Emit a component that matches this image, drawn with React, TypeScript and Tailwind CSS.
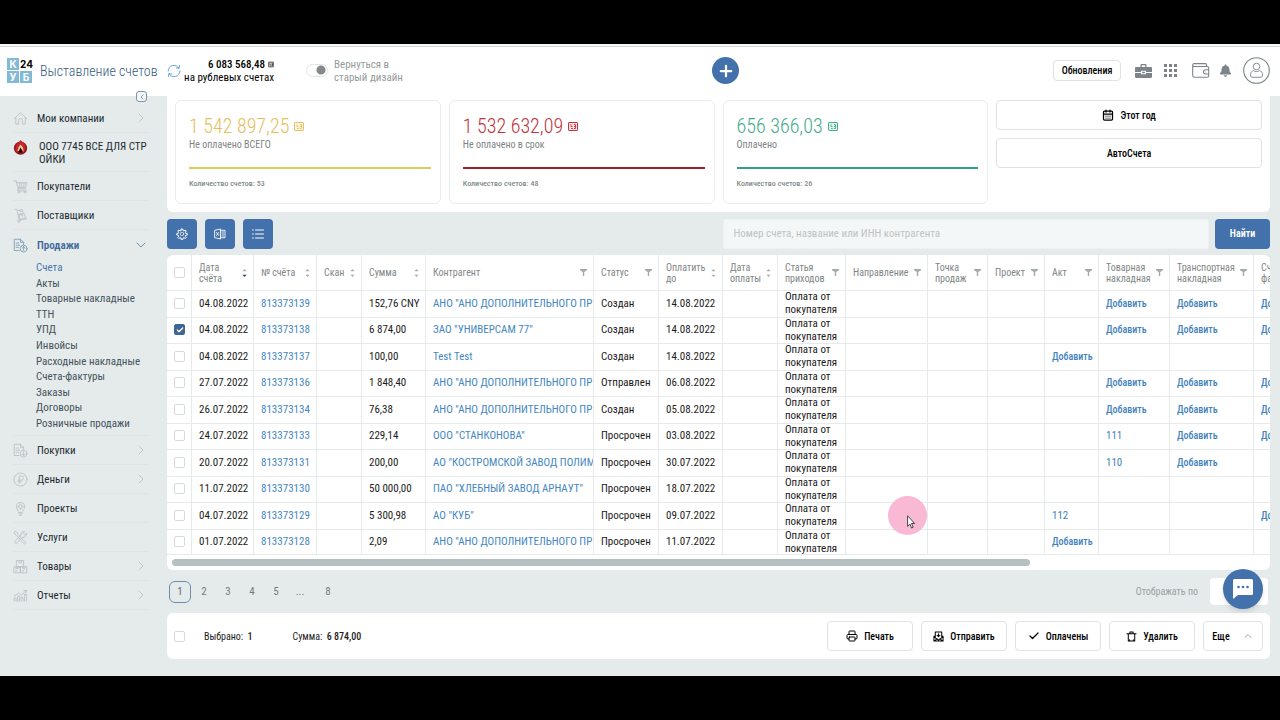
import React from "react";
import { FaBell } from "react-icons/fa";
import { CalendarDays, Check, ChevronDown, ChevronLeft, ChevronRight, ChevronUp, Plus, Printer } from "lucide-react";

type IconProps = { className?: string };

function Line({ className, children, box = 24 }: { className?: string; children: React.ReactNode; box?: number }) {
  return (
    <svg viewBox={`0 0 ${box} ${box}`} fill="none" stroke="currentColor" strokeWidth="1.4" strokeLinecap="round" strokeLinejoin="round" className={className} aria-hidden="true">
      {children}
    </svg>
  );
}

const HomeIcon = ({ className }: IconProps) => (
  <Line className={className}>
    <path d="M2 12 12 3l10 9M4.500 10.500V21H9v-6a3 3 0 0 1 6 0v6h4.500V10.500" />
  </Line>
);
const CartIcon = ({ className }: IconProps) => (
  <Line className={className}>
    <path d="M1 3h4l3.500 13H21M6 6h16l-2 8H8.200M8.500 16l-1 3H21M10 6l1 8M14 6v8M18 6l-1 8" />
    <circle cx="9.500" cy="21" r="1.500" />
    <circle cx="19" cy="21" r="1.500" />
  </Line>
);
const DollyIcon = ({ className }: IconProps) => (
  <Line className={className}>
    <path d="M3 2h3l4 17M11 19.500 22 17M8 4l7-1.500 1.500 6L9.500 10M10 11l8-2 2 7-8 2zM11 3.500l.8 3 1.500-.8M13.500 10.500l.7 2.500 1.500-.5" />
    <circle cx="9" cy="21" r="1.800" />
  </Line>
);
const SalesIcon = ({ className }: IconProps) => (
  <Line className={className}>
    <path d="M10 20H2V2h10l5 5v4M12 2v5h5M5 8h4M5 11.500h6M5 15h4" />
    <circle cx="17" cy="17" r="5.500" />
    <path d="M17 20v-6M14.500 16.300 17 14l2.500 2.300" />
  </Line>
);
const PurchaseIcon = ({ className }: IconProps) => (
  <Line className={className}>
    <path d="M10 20H2V2h10l5 5v4M12 2v5h5M5 8h4M5 11.500h6M5 15h4" />
    <circle cx="17" cy="17" r="5.500" />
    <path d="M17 14v6M14.500 17.700 17 20l2.500-2.300" />
  </Line>
);
const RubleIcon = ({ className }: IconProps) => (
  <Line className={className}>
    <circle cx="12" cy="12" r="10.500" />
    <path d="M10 18V6.500h3.500a3 3 0 0 1 0 6.500H8M8 15.500h5.500" />
  </Line>
);
const BulbIcon = ({ className }: IconProps) => (
  <Line className={className}>
    <path d="M9 18c0-3-3.500-4.500-3.500-9a6.500 6.500 0 0 1 13 0c0 4.500-3.500 6-3.500 9zM9.500 20.500h5M10.500 23h3" />
    <circle cx="12" cy="9" r="3" />
    <path d="M12 4.500V6M12 12v1.500M7.500 9H9M15 9h1.500" />
  </Line>
);
const ToolsIcon = ({ className }: IconProps) => (
  <Line className={className}>
    <path d="M2 3.500 3.500 2l4 2.500.5 2.500L20 19.500a1.800 1.800 0 0 1-2.500 2.500L6 9 3.800 7.500z" />
    <path d="M21.500 5.500 18.500 8 16 5.500l2.500-3a5 5 0 0 0-6 6L3 18a2.200 2.200 0 0 0 3 3l9.500-9.500a5 5 0 0 0 6-6z" />
  </Line>
);
const BoxesIcon = ({ className }: IconProps) => (
  <Line className={className}>
    <path d="M2 12.500h9.500V22H2zM12.500 12.500H22V22h-9.500zM6 2.500h11v10H6zM9.500 2.500V6h4V2.500M5 12.500v3h3v-3M16 12.500v3h3v-3M4 19h2M15 19h2" />
  </Line>
);
const ReportsIcon = ({ className }: IconProps) => (
  <Line className={className}>
    <path d="M2 21v-5h3v5M7.500 21v-8h3v8M13 21v-6h3v6M18.500 21V10h3v11M2 13l7-5 5 3.500L21 4M17.500 4H21v3.500" />
  </Line>
);
const CompanyLogo = ({ className }: IconProps) => (
  <svg viewBox="0 0 24 24" className={className} aria-hidden="true">
    <circle cx="12" cy="13" r="10.500" fill="#8d1416" />
    <path d="M12 0c3 3 8 6 8 12 0 4-2 7-4 9l-1-9-3-5-4 6-1 8c-3-3-4-6-3-10 1-5 6-7 8-11z" fill="#c9262b" />
    <path d="m7 18 2-7 3-4 4 5 1 7-3-4-2-3-2 5z" fill="#f0cf98" />
    <path d="m9 20 3-8 3 8z" fill="#160808" />
  </svg>
);
const SyncIcon = ({ className }: IconProps) => (
  <Line className={className}>
    <path strokeWidth="1.600" d="M2 12A10 10 0 0 1 20.500 7M22 12A10 10 0 0 1 3.500 17M21.500 2.500l-.7 5-4.800-.8M2.500 21.500l.7-5 4.800.8" />
  </Line>
);

const GearIcon = ({ className }: IconProps) => (
  <Line className={className}>
    <circle cx="12" cy="12" r="3.500" />
    <path strokeWidth="2" d="M10.500 2h3l.5 3 2 .8L18.500 4l2 2-1.800 2.500.8 2 3 .5v3l-3 .5-.8 2 1.800 2.500-2 2-2.500-1.800-2 .8-.5 3h-3l-.5-3-2-.8L5.500 21l-2-2 1.800-2.500-.8-2-3-.5v-3l3-.5.8-2L3.500 6l2-2L8 5.800l2-.8z" />
  </Line>
);
const ExcelIcon = ({ className }: IconProps) => (
  <Line className={className}>
    <path strokeWidth="1.800" d="M2 4.500 13 2v20L2 19.500zM13 4.500h9v15h-9M5 9l4.500 6M9.500 9 5 15M16 8h3M16 12h3M16 16h3" />
  </Line>
);
const ListIcon = ({ className }: IconProps) => (
  <Line className={className}>
    <path strokeWidth="2" d="M7 4h16M7 12h16M7 20h16M1 4h1.500M1 12h1.500M1 20h1.500" />
  </Line>
);
const AppsIcon = ({ className }: IconProps) => (
  <svg viewBox="0 0 13 13" fill="currentColor" className={className} aria-hidden="true">
    {[0, 5, 10].map((y) => [0, 5, 10].map((x) => <rect key={`${x}-${y}`} x={x} y={y} width="3" height="3" />))}
  </svg>
);
const BriefcaseIcon = ({ className }: IconProps) => (
  <svg viewBox="0 0 17 14" fill="currentColor" className={className} aria-hidden="true">
    <path d="M5.500 3V1.200C5.500.5 6 0 6.700 0h3.600c.7 0 1.200.5 1.200 1.200V3h4.300c.7 0 1.200.5 1.200 1.200V8h-6V6.800H6V8H0V4.200C0 3.500.5 3 1.200 3zm1.300 0h3.400V1.300H6.800zM0 9h6v1.200h5V9h6v3.800c0 .7-.5 1.200-1.200 1.200H1.200C.5 14 0 13.500 0 12.800zM7.200 7.800h2.600v1.500H7.200z" />
  </svg>
);
const WalletIcon = ({ className }: IconProps) => (
  <svg viewBox="0 0 18 15" fill="none" stroke="currentColor" strokeWidth="1.100" className={className} aria-hidden="true">
    <path d="M14.500 3.500V1.800c0-.7-.4-1.200-1.100-1.200H2C1.200.6.700 1.200.7 2s.6 1.500 1.300 1.500h13.200c.9 0 1.500.5 1.500 1.300v8c0 1-.6 1.500-1.500 1.500H2.500c-1.200 0-1.800-.6-1.800-1.800V2" />
    <path d="M17 6.800h-3.400a2.100 2.100 0 0 0 0 4.200H17M13.500 9h.6" />
  </svg>
);
const UserIcon = ({ className }: IconProps) => (
  <svg viewBox="0 0 27 27" fill="none" stroke="currentColor" className={className} aria-hidden="true">
    <circle cx="13.500" cy="13.500" r="12.800" strokeWidth="1.100" />
    <circle cx="13.500" cy="9.500" r="3.300" strokeWidth=".9" />
    <path strokeWidth=".9" d="M10.500 13.500c-2 .6-3 2.200-3 4.500 0 1.700.8 2.300 2.500 2.300h7c1.700 0 2.500-.6 2.500-2.300 0-2.300-1-3.900-3-4.500-1.800 1.500-4.200 1.500-6 0z" />
  </svg>
);
const MailIcon = ({ className }: IconProps) => (
  <Line className={className}>
    <path strokeWidth="2.200" d="M5 10 2 12v10h20V12l-3-2M5 14V2h14v12M2 13l10 7 10-7M2 22l7-5M22 22l-7-5M12 6v6M9 9.500l3 3 3-3" />
  </Line>
);
const TrashIcon = ({ className }: IconProps) => (
  <Line className={className}>
    <path strokeWidth="2.200" d="M2 6h20M5 6v16h14V6M8.500 6V2h7v4M8 19v1M16 19v1" />
  </Line>
);
const CurrencyBox = ({ className }: IconProps) => (
  <svg viewBox="0 0 10 9" fill="none" stroke="currentColor" className={className} role="img" aria-label="₽">
    <rect x=".5" y=".5" width="9" height="8" rx=".6" fill="currentColor" fillOpacity=".15" />
    <path strokeWidth=".9" d="M3 2.300v2.200h1.500M3 6.500h1.800M6 2.500h1.500v4H5.800M6 4.500h1.500" />
  </svg>
);
const SortIcon = ({ active = false }: { active?: boolean }) => (
  <svg viewBox="0 0 5 8" className="h-2 w-[5px] shrink-0" aria-hidden="true">
    <path d="M.3 2.300 2.500 0l2.200 2.300z" fill="#aab1b1" />
    <path d="M.3 5.700h4.400L2.500 8z" fill={active ? "#2a4d6e" : "#aab1b1"} />
  </svg>
);
const FilterIcon = () => (
  <svg viewBox="0 0 7 7" className="size-[7px] shrink-0" aria-hidden="true">
    <path d="M0 0h7v1.300L4.200 3v4H2.800V3L0 1.300z" fill="#a3aaaa" />
  </svg>
);

function Tick({ label, checked = false }: { label: string; checked?: boolean }) {
  return (
    <span className="relative block size-[11px]">
      <input type="checkbox" aria-label={label} defaultChecked={checked} className="peer block size-[11px] appearance-none rounded-xs border border-[#d5dadc] bg-white checked:border-[#3f6593] checked:bg-[#3f6593]" />
      <Check strokeWidth={4} className="pointer-events-none absolute inset-0 m-auto hidden size-2 text-white peer-checked:block" />
    </span>
  );
}

const topNav = [
  { label: "Покупатели", icon: CartIcon },
  { label: "Поставщики", icon: DollyIcon },
];
const salesNav = ["Счета", "Акты", "Товарные накладные", "ТТН", "УПД", "Инвойсы", "Расходные накладные", "Счета-фактуры", "Заказы", "Договоры", "Розничные продажи"];
const bottomNav = [
  { label: "Покупки", icon: PurchaseIcon, more: true },
  { label: "Деньги", icon: RubleIcon, more: true },
  { label: "Проекты", icon: BulbIcon, more: false },
  { label: "Услуги", icon: ToolsIcon, more: false },
  { label: "Товары", icon: BoxesIcon, more: true },
  { label: "Отчеты", icon: ReportsIcon, more: true },
];

function NavItem({ label, icon: Icon, more = false }: { label: string; icon: React.ComponentType<IconProps>; more?: boolean }) {
  return (
    <a href="#" className="flex h-[29px] items-center border-b border-[#dfe5e5] text-[#1d2a32]">
      <Icon className="mr-2 size-[15px] text-[#b9c1c2]" />
      <span className="flex-1 pl-px">{label}</span>
      {more && <ChevronRight strokeWidth={1} className="size-4 text-[#a9b4b7]" />}
    </a>
  );
}

const cards = [
  { sum: "1 542 897,25", label: "Не оплачено ВСЕГО", count: 53, color: "text-[#e6c05c]", line: "bg-[#e2c95c]" },
  { sum: "1 532 632,09", label: "Не оплачено в срок", count: 48, color: "text-[#c0333a]", line: "bg-[#a02028]" },
  { sum: "656 366,03", label: "Оплачено", count: 26, color: "text-[#46ac8c]", line: "bg-[#35a184]" },
];

type Column = { title: string[]; width: string; tool?: "sort" | "active" | "filter" };
const columns: Column[] = [
  { title: ["Дата", "счёта"], width: "w-[62px]", tool: "active" },
  { title: ["№ счёта"], width: "w-[63px]", tool: "sort" },
  { title: ["Скан"], width: "w-[45px]", tool: "sort" },
  { title: ["Сумма"], width: "w-[64px]", tool: "sort" },
  { title: ["Контрагент"], width: "w-[168px]", tool: "filter" },
  { title: ["Статус"], width: "w-[65px]", tool: "filter" },
  { title: ["Оплатить", "до"], width: "w-[64px]", tool: "sort" },
  { title: ["Дата", "оплаты"], width: "w-[55px]", tool: "sort" },
  { title: ["Статья", "приходов"], width: "w-[68px]", tool: "filter" },
  { title: ["Направление"], width: "w-[82px]", tool: "filter" },
  { title: ["Точка", "продаж"], width: "w-[60px]", tool: "filter" },
  { title: ["Проект"], width: "w-[57px]", tool: "filter" },
  { title: ["Акт"], width: "w-[54px]", tool: "filter" },
  { title: ["Товарная", "накладная"], width: "w-[71px]", tool: "filter" },
  { title: ["Транспортная", "накладная"], width: "w-[84px]", tool: "filter" },
  { title: ["Счет-", "фактура"], width: "w-[70px]", tool: "filter" },
];

const ADD = "Добавить";
type Row = { date: string; no: string; sum: string; who: string; status: string; due: string; act?: string; bill?: string; ttn?: string; inv?: string; checked?: boolean };
const ANO = 'АНО "АНО ДОПОЛНИТЕЛЬНОГО ПР';
const rows: Row[] = [
  { date: "04.08.2022", no: "813373139", sum: "152,76 CNY", who: ANO, status: "Создан", due: "14.08.2022", bill: ADD, ttn: ADD, inv: ADD },
  { date: "04.08.2022", no: "813373138", sum: "6 874,00", who: 'ЗАО "УНИВЕРСАМ 77"', status: "Создан", due: "14.08.2022", bill: ADD, ttn: ADD, inv: ADD, checked: true },
  { date: "04.08.2022", no: "813373137", sum: "100,00", who: "Test Test", status: "Создан", due: "14.08.2022", act: ADD },
  { date: "27.07.2022", no: "813373136", sum: "1 848,40", who: ANO, status: "Отправлен", due: "06.08.2022", bill: ADD, ttn: ADD, inv: ADD },
  { date: "26.07.2022", no: "813373134", sum: "76,38", who: ANO, status: "Создан", due: "05.08.2022", bill: ADD, ttn: ADD, inv: ADD },
  { date: "24.07.2022", no: "813373133", sum: "229,14", who: 'ООО "СТАНКОНОВА"', status: "Просрочен", due: "03.08.2022", bill: "111", ttn: ADD, inv: ADD },
  { date: "20.07.2022", no: "813373131", sum: "200,00", who: 'АО "КОСТРОМСКОЙ ЗАВОД ПОЛИМ', status: "Просрочен", due: "30.07.2022", bill: "110", ttn: ADD },
  { date: "11.07.2022", no: "813373130", sum: "50 000,00", who: 'ПАО "ХЛЕБНЫЙ ЗАВОД АРНАУТ"', status: "Просрочен", due: "18.07.2022" },
  { date: "04.07.2022", no: "813373129", sum: "5 300,98", who: 'АО "КУБ"', status: "Просрочен", due: "09.07.2022", act: "112", inv: ADD },
  { date: "01.07.2022", no: "813373128", sum: "2,09", who: ANO, status: "Просрочен", due: "11.07.2022", act: ADD },
];

function Cell({ children, className = "" }: { children?: React.ReactNode; className?: string }) {
  return <td className={`overflow-hidden border-r border-[#e6eaea] pl-[7px] shadow-[inset_0_1px_0_#e6eaea] ${className}`}>{children}</td>;
}

function DocCell({ value }: { value?: string }) {
  return (
    <Cell>
      {value && (
        <a href="#" className={value === ADD ? "text-[10px] font-medium text-[#3f82bd]" : "text-[#3f82bd]"}>
          {value}
        </a>
      )}
    </Cell>
  );
}

const whiteButton = "flex items-center justify-center rounded-sm border border-[#dfe3e3] bg-white text-[10px] font-medium text-black";

export default function App() {
  return (
    <div className="relative flex min-h-screen flex-col bg-black py-11 font-['Roboto_Condensed','Open_Sans',sans-serif] text-[11px] leading-[13px] text-[#1c1c1c]">
      <div className="flex flex-1 flex-col bg-[#e5ebeb]">
        <header className="flex h-[52px] items-center bg-white pt-px pr-[10px] pl-[7px] shadow-[inset_0_2px_0_#f4f6f6,inset_0_3px_0_#d3d8d8]">
          <a href="#" aria-label="КУБ24" className="grid size-[25px] grid-cols-2 gap-px text-center font-['Inter','Open_Sans',sans-serif] text-[10px] leading-[12px] font-bold text-white">
            <span className="bg-[#84b9d6]">К</span>
            <span className="text-black">24</span>
            <span className="bg-[#84b9d6]">У</span>
            <span className="bg-[#84b9d6]">Б</span>
          </a>
          <h1 className="ml-2 w-[127px] text-[14px] leading-5 font-light whitespace-nowrap text-[#345a80]">Выставление счетов</h1>
          <button type="button" aria-label="Обновить остатки">
            <SyncIcon className="size-3.5 text-[#5f9fca]" />
          </button>
          <div className="ml-[3px] w-[90px] text-right text-[11px] whitespace-nowrap text-black">
            <p className="flex items-center justify-end gap-[3px] font-medium">
              6 083 568,48 <CurrencyBox className="h-[7px] w-1.5" />
            </p>
            <p>на рублевых счетах</p>
          </div>
          <label className="ml-8 flex items-center gap-1.5 text-[11px] text-[#959b9b]">
            <input type="checkbox" role="switch" className="h-[13px] w-[22px] appearance-none rounded-full border border-[#e2e6e6] bg-white bg-[radial-gradient(circle_at_14px_5px,#848a8c_4px,transparent_5px)]" />
            <span>
              Вернуться в
              <br />
              старый дизайн
            </span>
          </label>
          <div className="flex flex-1 justify-center pr-1">
            <button type="button" aria-label="Добавить" className="flex size-[27px] items-center justify-center rounded-full bg-[#4371ab] text-white">
              <Plus strokeWidth={3} className="size-[18px]" />
            </button>
          </div>
          <button type="button" className={`${whiteButton} h-[21px] w-[68px]`}>
            Обновления
          </button>
          <nav aria-label="Сервисы" className="flex items-center text-[#7c8489]">
            <a href="#" aria-label="Портфель"><BriefcaseIcon className="ml-3.5 h-3.5 w-[17px]" /></a>
            <a href="#" aria-label="Приложения"><AppsIcon className="ml-3 size-[13px]" /></a>
            <a href="#" aria-label="Кошелек"><WalletIcon className="ml-[15px] h-[15px] w-[18px]" /></a>
            <a href="#" aria-label="Уведомления"><FaBell className="ml-2.5 h-[13px] w-[11px]" /></a>
            <a href="#" aria-label="Профиль"><UserIcon className="ml-3 size-[27px]" /></a>
          </nav>
        </header>

        <div className="flex flex-1">
          <aside className="relative w-[167px] shrink-0 pt-2">
            <button type="button" aria-label="Свернуть меню" className="absolute -top-[5px] left-[136px] flex size-[11px] items-center justify-center rounded-[3px] border border-[#7e97a8] bg-[#f3f6f6] text-[#4f7088]">
              <ChevronLeft strokeWidth={2} className="size-2" />
            </button>
            <nav aria-label="Меню" className="ml-[13px] w-[136px]">
              <NavItem label="Мои компании" icon={HomeIcon} more />
              <a href="#" className="flex h-[39px] border-b border-[#dfe5e5] pt-[7px] text-[#1d2a32]">
                <CompanyLogo className="mr-[11px] size-[15px] shrink-0" />
                <span className="whitespace-nowrap">
                  ООО 7745 ВСЕ ДЛЯ СТР
                  <br />
                  ОЙКИ
                </span>
              </a>
              {topNav.map((item) => (
                <NavItem key={item.label} {...item} />
              ))}
              <a href="#" className="flex h-[30px] items-center font-semibold text-[#41699b]">
                <SalesIcon className="mr-2 size-[15px] text-[#7d9fb8]" />
                <span className="flex-1 pl-px">Продажи</span>
                <ChevronDown strokeWidth={1.5} className="size-4 text-[#6b95b5]" />
              </a>
              <ul className="grid h-[176px] auto-rows-fr border-b border-[#dfe5e5] pb-1 pl-[23px] text-[#46545c]">
                {salesNav.map((item, i) => (
                  <li key={item} className="flex items-center">
                    <a href="#" className={i === 0 ? "text-[#4477ab]" : ""}>
                      {item}
                    </a>
                  </li>
                ))}
              </ul>
              {bottomNav.map((item) => (
                <NavItem key={item.label} {...item} />
              ))}
            </nav>
          </aside>

          <main className="mr-[10px] flex min-w-0 flex-1 flex-col">
            <section className="grid grid-cols-4 gap-2 rounded-b-md bg-white px-2 pt-1 pb-2">
              {cards.map((card) => (
                <article key={card.label} className="h-[104px] rounded-md border border-[#eaeded] px-[13px] pt-3.5">
                  <p className={`flex items-center gap-[5px] text-[20px] leading-[23px] font-light ${card.color}`}>
                    {card.sum} <CurrencyBox className="h-[9px] w-2.5" />
                  </p>
                  <p className="text-[10px] text-[#7e8484]">{card.label}</p>
                  <div className={`mt-4 mr-[-4px] h-[2px] ${card.line}`} />
                  <p className="mt-2 text-[8px] font-medium text-[#868c8c]">Количество счетов: {card.count}</p>
                </article>
              ))}
              <div className="flex flex-col gap-2">
                <button type="button" className={`${whiteButton} h-[30px] gap-1.5`}>
                  <CalendarDays strokeWidth={2.5} className="size-3" /> Этот год
                </button>
                <button type="button" className={`${whiteButton} h-[30px]`}>АвтоСчета</button>
              </div>
            </section>

            <div className="flex h-[43px] items-center gap-2">
              {[
                { label: "Настройки", icon: <GearIcon className="size-3" /> },
                { label: "Выгрузить в Excel", icon: <ExcelIcon className="size-3" /> },
                { label: "Список", icon: <ListIcon className="size-3" /> },
              ].map((b) => (
                <button key={b.label} type="button" aria-label={b.label} className="flex size-[30px] items-center justify-center rounded-sm bg-[#4371ab] text-white">
                  {b.icon}
                </button>
              ))}
              <form className="ml-auto flex w-1/2 gap-1.5 pl-1">
                <input type="search" aria-label="Поиск" placeholder="Номер счета, название или ИНН контрагента" className="h-[30px] min-w-0 flex-1 rounded-xs border border-[#eef1f1] bg-[#f4f7f7] px-2.5 text-[11px] placeholder:text-[#bdc4c4]" />
                <button type="button" className="h-[30px] w-[55px] rounded-sm bg-[#4371ab] text-[10px] font-semibold text-white">
                  Найти
                </button>
              </form>
            </div>

            <section className="overflow-hidden rounded-md bg-white pb-1">
              <table className="h-[300px] w-[1157px] table-fixed border-separate border-spacing-0 shadow-[inset_0_-1px_0_#e6eaea]">
                <thead className="text-[10px] leading-[11px] text-[#7f8686]">
                  <tr className="h-[35px]">
                    <th className="w-[25px] border-r border-[#e6eaea] pl-[7px]">
                      <Tick label="Выбрать все" />
                    </th>
                    {columns.map((c, i) => (
                      <th key={i} className={`border-r border-[#e6eaea] pr-1.5 pl-[7px] text-left font-normal ${c.width}`}>
                        <span className="flex items-center justify-between">
                          <span className="whitespace-nowrap">
                            {c.title[0]}
                            {c.title[1] && <br />}
                            {c.title[1]}
                          </span>
                          {c.tool === "filter" ? <FilterIcon /> : <SortIcon active={c.tool === "active"} />}
                        </span>
                      </th>
                    ))}
                  </tr>
                </thead>
                <tbody>
                  {rows.map((r) => (
                    <tr key={r.no}>
                      <Cell><Tick label={`Счет ${r.no}`} checked={r.checked} /></Cell>
                      <Cell>{r.date}</Cell>
                      <Cell><a href="#" className="text-[#4587bf]">{r.no}</a></Cell>
                      <Cell />
                      <Cell className="whitespace-nowrap">{r.sum}</Cell>
                      <Cell className="whitespace-nowrap"><a href="#" className="text-[#4587bf]">{r.who}</a></Cell>
                      <Cell>{r.status}</Cell>
                      <Cell>{r.due}</Cell>
                      <Cell />
                      <Cell>Оплата от покупателя</Cell>
                      <Cell />
                      <Cell />
                      <Cell />
                      <DocCell value={r.act} />
                      <DocCell value={r.bill} />
                      <DocCell value={r.ttn} />
                      <DocCell value={r.inv} />
                    </tr>
                  ))}
                </tbody>
              </table>
              <div className="mx-[5px] mt-1 h-[7px]">
                <div className="h-full w-[78.5%] rounded-full bg-[#b5c0c1]" />
              </div>
            </section>

            <div className="flex h-[43px] items-center text-[#737b7d]">
              <nav aria-label="Страницы" className="flex gap-0.5 pl-0.5 text-[11px]">
                {["1", "2", "3", "4", "5", "...", "8"].map((p, i) => (
                  <a key={p} href="#" className={`flex size-[22px] items-center justify-center rounded-md ${i === 0 ? "border border-[#6d8ea8] text-[#5a6b76]" : ""} ${i === 6 ? "ml-1" : ""}`}>
                    {p}
                  </a>
                ))}
              </nav>
              <label className="ml-auto flex items-center gap-3 pr-0.5 text-[10px] text-[#9ba1a2]">
                Отображать по
                <select className="h-[27px] w-[58px] appearance-none rounded-sm bg-white pl-3 text-[#4477ab]">
                  <option>10</option>
                </select>
              </label>
            </div>

            <section className="mb-[17px] flex h-[46px] items-center rounded-md bg-white pr-[7px] pl-[7px]">
              <Tick label="Выбрать счета" />
              <p className="ml-[19px] text-[10px]">
                Выбрано: <b className="ml-0.5 font-medium">1</b>
              </p>
              <p className="ml-10 text-[10px]">
                Сумма: <b className="ml-0.5 font-medium">6 874,00</b>
              </p>
              <div className="ml-auto flex gap-2">
                <button type="button" className={`${whiteButton} h-[30px] w-[86px] gap-1.5`}><Printer strokeWidth={2} className="size-3" />Печать</button>
                <button type="button" className={`${whiteButton} h-[30px] w-[86px] gap-1.5`}><MailIcon className="size-[11px]" />Отправить</button>
                <button type="button" className={`${whiteButton} h-[30px] w-[86px] gap-1.5`}><Check strokeWidth={2.500} className="size-3" />Оплачены</button>
                <button type="button" className={`${whiteButton} h-[30px] w-[86px] gap-1.5`}><TrashIcon className="size-[11px]" />Удалить</button>
                <button type="button" className={`${whiteButton} h-[30px] w-[60px] gap-3`}>Еще<ChevronUp strokeWidth={2} className="size-3 text-[#9da5a7]" /></button>
              </div>
            </section>
          </main>
        </div>
      </div>

      <button type="button" aria-label="Чат" className="absolute top-[569px] right-[17px] flex size-10 items-center justify-center rounded-full bg-[#4371ab] shadow-md">
        <svg viewBox="0 0 22 20" className="h-5 w-[22px]" aria-hidden="true">
          <path d="M2.500 0h17A1.500 1.500 0 0 1 21 1.500v13a1.500 1.500 0 0 1-1.500 1.500H6l-5 4V1.500A1.500 1.500 0 0 1 2.500 0z" fill="#fff" />
          <g fill="#4371ab">
            <circle cx="6.500" cy="8" r="1.300" />
            <circle cx="11" cy="8" r="1.300" />
            <circle cx="15.500" cy="8" r="1.300" />
          </g>
        </svg>
      </button>
      <div className="pointer-events-none absolute top-[496px] left-[888px] size-[39px] rounded-full bg-[#f9b8d4]">
        <svg viewBox="0 0 9 14" className="absolute top-[19px] left-[19px] h-3.5 w-[9px]" aria-hidden="true">
          <path d="M.6.8v10.500l2.300-2.200 1.700 3.900 1.600-.7-1.700-3.800h3.200z" fill="#fff" stroke="#333" strokeWidth=".9" />
        </svg>
      </div>
    </div>
  );
}
